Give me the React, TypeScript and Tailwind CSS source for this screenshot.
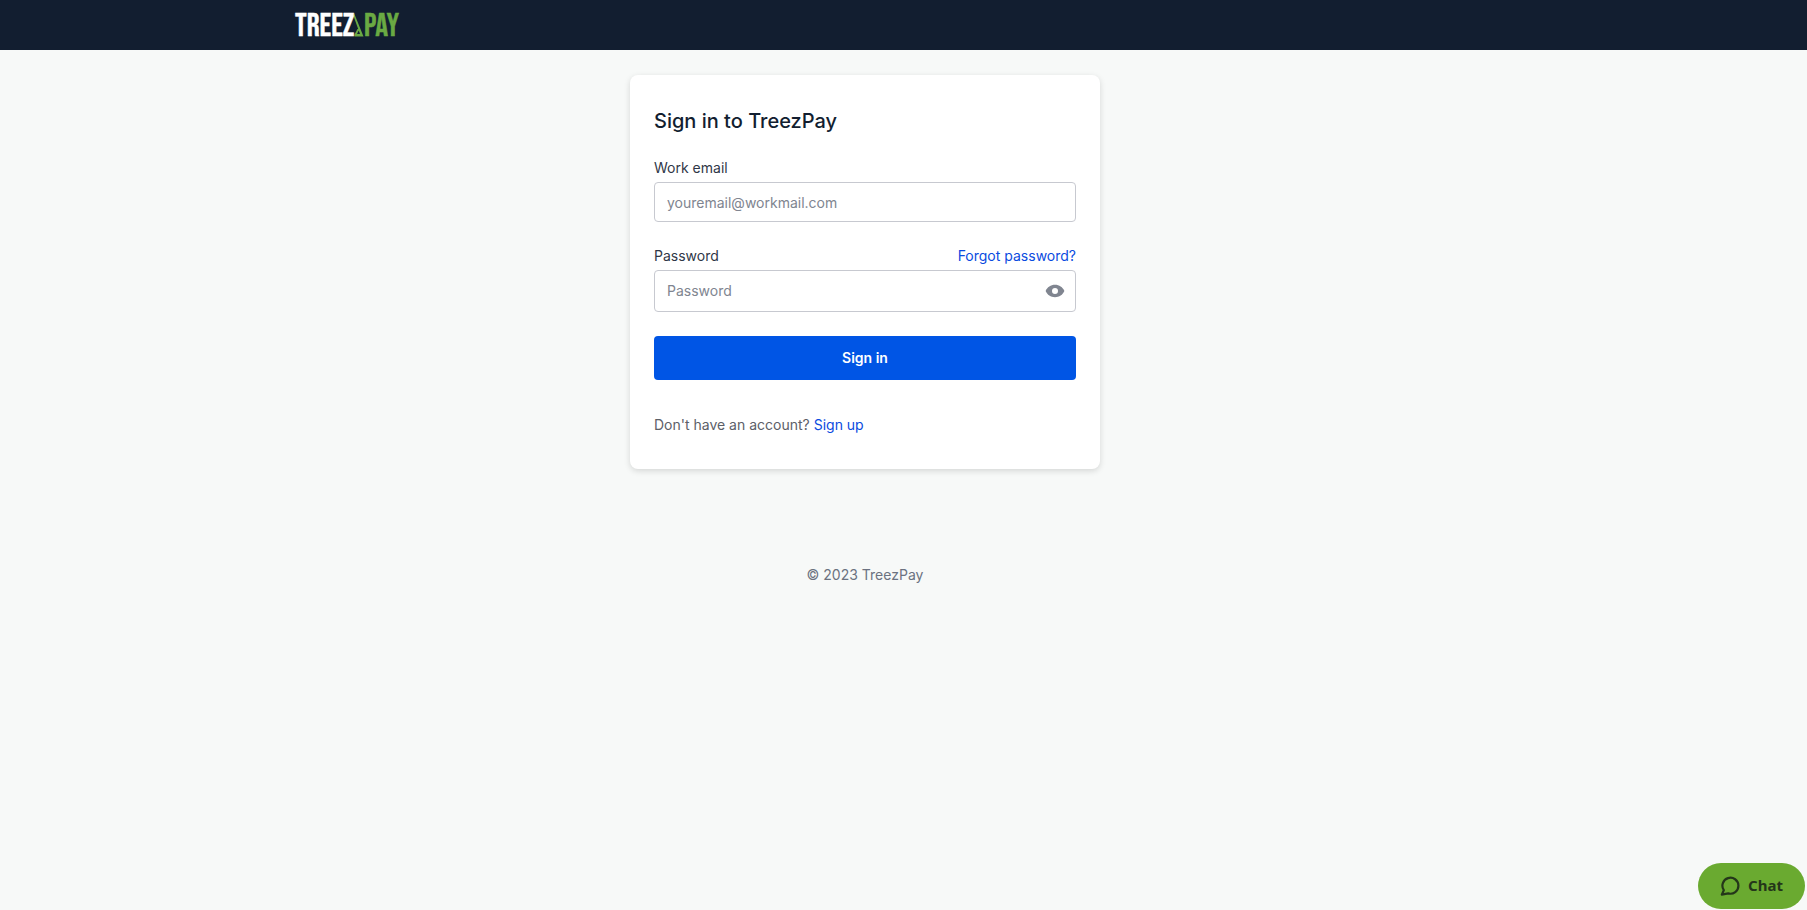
function Logo() {
  return (
    <a href="#" aria-label="TreezPay" className="block">
      <svg viewBox="0 0 106 24" className="h-6 w-[106px] overflow-visible">
        <path d="M59 0L68.500 23.500H59.500V21.500L62.500 16H64.500L62 21H65L58.500 3Z" fill="#6aaa43" />
        <g fontFamily="'Bebas Neue', 'Roboto Condensed', 'Liberation Sans Narrow', sans-serif" fontSize="32" strokeWidth="0.4">
          <text x="0" y="23" fill="#ffffff" stroke="#ffffff">TREEZ</text>
          <text x="69" y="23" fill="#6aaa43" stroke="#6aaa43">PAY</text>
        </g>
      </svg>
    </a>
  );
}

function EyeIcon() {
  return (
    <svg viewBox="0 0 20 14" className="h-[14px] w-5" fill="#808590">
      <path
        fillRule="evenodd"
        d="M10 .8C5.800.8 2.200 3.200.6 7c1.600 3.800 5.200 6.200 9.400 6.200s7.800-2.400 9.400-6.200C17.800 3.200 14.200.8 10 .8ZM10 10a3 3 0 1 1 0-6 3 3 0 0 1 0 6Z"
      />
    </svg>
  );
}

function ChatIcon() {
  return (
    <svg viewBox="0 0 20 20" className="h-5 w-5" fill="none" stroke="#24361a" strokeWidth="2.200" strokeLinecap="round" strokeLinejoin="round">
      <path d="M3.800 14.200A8 8 0 1 1 8.200 17.400L1.800 18.600Z" />
    </svg>
  );
}

export default function App() {
  return (
    <div className="min-h-screen bg-[#f7f9f8] font-['Inter',sans-serif] text-sm text-[#2f3747]">
      <header className="bg-[#121e30] pr-[77px]">
        <div className="mx-auto flex h-[50px] max-w-[1140px] items-center">
          <Logo />
        </div>
      </header>

      <main className="flex flex-col items-center pt-[25px] pr-[77px]">
        <div className="w-full max-w-[470px] rounded-lg bg-white px-6 pt-8 pb-[34px] shadow-[0_2px_6px_rgba(0,0,0,0.14)]">
          <h1 className="mb-[23px] text-xl leading-7 font-medium text-[#121e30]">Sign in to TreezPay</h1>
          <form onSubmit={(e) => e.preventDefault()}>
            <label htmlFor="email" className="mb-1 block leading-5">Work email</label>
            <input
              id="email"
              type="email"
              placeholder="youremail@workmail.com"
              className="mb-6 block h-10 w-full rounded border border-[#c7c9d0] px-3 placeholder:text-[#808590]"
            />
            <div className="mb-1 flex justify-between leading-5">
              <label htmlFor="password">Password</label>
              <a href="#" className="text-[#0a4be0]">Forgot password?</a>
            </div>
            <div className="mb-6 flex h-[42px] items-center rounded border border-[#c7c9d0] pr-[10px] pl-3">
              <input
                id="password"
                type="password"
                placeholder="Password"
                className="min-w-0 flex-1 outline-none placeholder:text-[#808590]"
              />
              <button type="button" aria-label="Show password">
                <EyeIcon />
              </button>
            </div>
            <button type="submit" className="h-11 w-full rounded bg-[#0055e5] font-semibold text-white">
              Sign in
            </button>
          </form>
          <p className="mt-[35px] leading-5 text-[#5c6068]">
            Don't have an account? <a href="#" className="text-[#0a4be0]">Sign up</a>
          </p>
        </div>
        <footer className="mt-24 leading-5 text-[#6b7280]">© 2023 TreezPay</footer>
      </main>

      <button
        type="button"
        className="fixed right-[2px] bottom-px flex h-[46px] items-center gap-2 rounded-full bg-[#6aaa30] px-[22px] font-['Noto_Sans',sans-serif] text-[15px] font-bold text-[#24361a]"
      >
        <ChatIcon />
        Chat
      </button>
    </div>
  );
}
